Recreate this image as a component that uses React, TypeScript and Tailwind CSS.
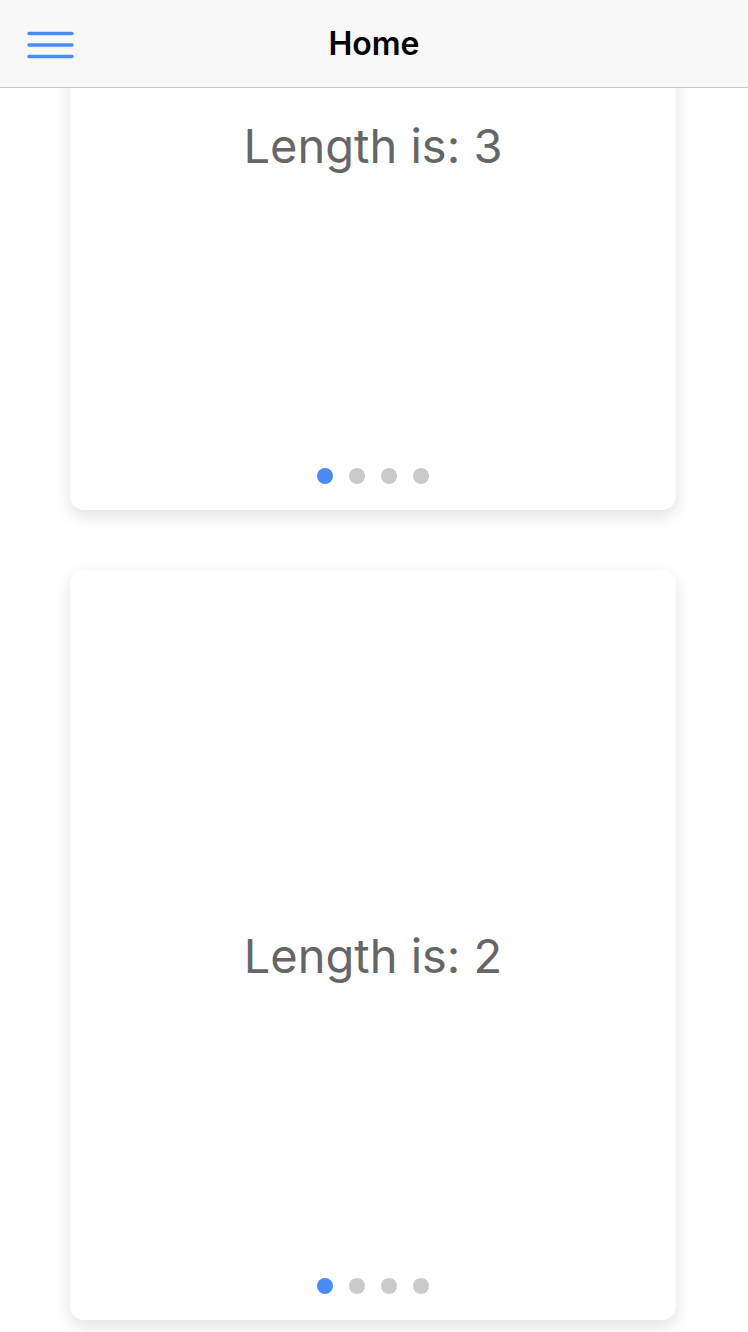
const cards = [3, 2];

function MenuIcon() {
  return (
    <svg width="48" height="30" viewBox="0 0 48 30" fill="none">
      <path d="M2 3.5h43M2 15h43M2 26.5h43" stroke="#4a8cf7" strokeWidth="3.4" strokeLinecap="round" />
    </svg>
  );
}

function Dots() {
  return (
    <div className="flex justify-center gap-4 pb-[26px]">
      <span className="h-4 w-4 rounded-full bg-[#4a8cf7]" />
      <span className="h-4 w-4 rounded-full bg-[#cacaca]" />
      <span className="h-4 w-4 rounded-full bg-[#cacaca]" />
      <span className="h-4 w-4 rounded-full bg-[#cacaca]" />
    </div>
  );
}

function Card({ length, first }: { length: number; first?: boolean }) {
  return (
    <div
      className={`ml-[70px] flex h-[750px] w-[606px] flex-col rounded-[14px] bg-white shadow-[0_6px_16px_rgba(0,0,0,0.12)] ${
        first ? 'mt-[-328px]' : 'mt-[60px]'
      }`}
    >
      <div className="flex flex-1 items-center justify-center pt-[62px]">
        <p className="text-[47px] leading-none text-[#666666]">Length is: {length}</p>
      </div>
      <Dots />
    </div>
  );
}

export default function App() {
  return (
    <div className="flex h-[1332px] w-[748px] flex-col overflow-hidden bg-white font-['Inter',sans-serif]">
      <header className="relative z-10 flex h-[88px] shrink-0 items-center border-b border-[#c8c8c8] bg-[#f8f8f8]">
        <button className="absolute left-[27px] top-[30px]">
          <MenuIcon />
        </button>
        <h1 className="w-full text-center text-[32px] font-semibold text-black">Home</h1>
      </header>
      <main className="flex-1 overflow-hidden">
        {cards.map((n, i) => (
          <Card key={n} length={n} first={i === 0} />
        ))}
      </main>
    </div>
  );
}
